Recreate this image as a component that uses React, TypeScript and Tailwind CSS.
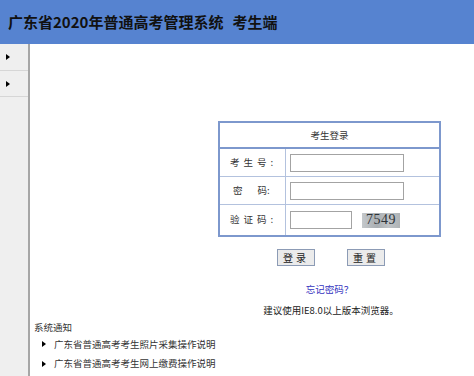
import React from "react";

const font = { fontFamily: '"Noto Sans CJK SC", "Noto Sans", sans-serif' };

function Tri({ className = "" }: { className?: string }) {
  return (
    <span
      className={`inline-block h-0 w-0 border-y-[3px] border-l-[4px] border-y-transparent border-l-black ${className}`}
    />
  );
}

export default function App() {
  return (
    <div className="flex h-[376px] w-[474px] flex-col overflow-hidden bg-white" style={font}>
      <div className="flex h-[44px] items-center bg-[#5683d0] pl-[8px] pb-[2px]">
        <span className="text-[15px] font-bold leading-none text-[#111]">
          广东省2020年普通高考管理系统<span className="ml-[9px]">考生端</span>
        </span>
      </div>
      <div className="flex flex-1">
        <div className="w-[30px] border-r-2 border-[#a6a6a6] bg-[#efefef]">
          <div className="flex h-[27px] items-center border-b border-[#d6d6d6] pl-[6px]">
            <Tri />
          </div>
          <div className="flex h-[26px] items-center border-b border-[#d6d6d6] pl-[6px]">
            <Tri />
          </div>
        </div>
        <div className="flex-1 text-[9.5px] leading-none text-[#333]">
          <div className="ml-[188px] mt-[77px] w-[223px]">
            <div className="border-2 border-[#7d98cd]">
              <div className="flex h-[26px] items-center justify-center border-b-2 border-[#7d98cd] pt-[1px]">
                考生登录
              </div>
              <div className="grid grid-cols-[66px_1fr]">
                <div className="flex h-[28px] items-center border-b border-r border-[#b3c2de] pl-[10px] tracking-[4px]">
                  考生号:
                </div>
                <div className="flex h-[28px] items-center border-b border-[#b3c2de] pl-[4px]">
                  <div className="h-[18px] w-[114px] border border-[#a3a3a3] bg-white" />
                </div>
                <div className="flex h-[28px] items-center border-b border-r border-[#b3c2de] pl-[13px]">
                  <span>密</span>
                  <span className="ml-[15px]">码:</span>
                </div>
                <div className="flex h-[28px] items-center border-b border-[#b3c2de] pl-[4px]">
                  <div className="h-[18px] w-[114px] border border-[#a3a3a3] bg-white" />
                </div>
                <div className="flex h-[30px] items-center border-r border-[#b3c2de] pl-[10px] tracking-[4px]">
                  验证码:
                </div>
                <div className="flex h-[30px] items-center pl-[4px]">
                  <div className="h-[18px] w-[62px] border border-[#a3a3a3] bg-white" />
                  <div
                    className="ml-[10px] flex h-[15px] w-[38px] items-center justify-center bg-[linear-gradient(90deg,#c4c8cb,#a9aeb2_40%,#bfc3c6_70%,#aeb3b6)] text-[14px] tracking-[0.5px] text-[#2f3438]"
                    style={{ fontFamily: '"Liberation Serif", "DejaVu Serif", serif' }}
                  >
                    7549
                  </div>
                </div>
              </div>
            </div>
            <div className="mt-[12px] flex justify-center gap-[32px] pl-[3px]">
              <div className="flex h-[17px] w-[38px] items-center justify-center border border-[#8c9bb5] bg-[#ebebeb] text-[10px] tracking-[3px] text-[#222]">
                登录
              </div>
              <div className="flex h-[17px] w-[38px] items-center justify-center border border-[#8c9bb5] bg-[#ebebeb] text-[10px] tracking-[3px] text-[#222]">
                重置
              </div>
            </div>
            <div className="mt-[19px] text-center text-[#3434c0]">忘记密码？</div>
            <div className="mt-[11px] pl-[3px] text-center text-[#222]">建议使用IE8.0以上版本浏览器。</div>
          </div>
          <div className="ml-[4px] mt-[8px]">系统通知</div>
          <div className="ml-[12px] mt-[7px] flex items-center">
            <Tri className="border-y-[2.5px] border-l-[3.5px]" />
            <span className="ml-[8px]">广东省普通高考考生照片采集操作说明</span>
          </div>
          <div className="ml-[12px] mt-[10px] flex items-center">
            <Tri className="border-y-[2.5px] border-l-[3.5px]" />
            <span className="ml-[8px]">广东省普通高考考生网上缴费操作说明</span>
          </div>
        </div>
      </div>
    </div>
  );
}
